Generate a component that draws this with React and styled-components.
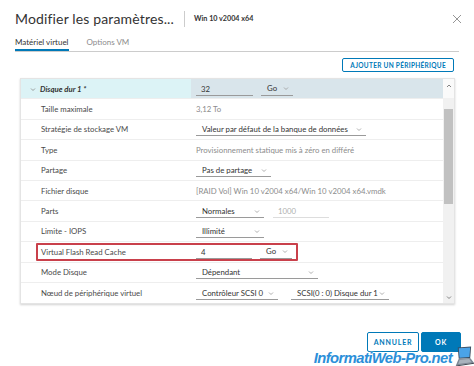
import React from 'react';
import styled, { createGlobalStyle } from 'styled-components';

const GlobalStyle = createGlobalStyle`
    html, body {
        margin: 0;
        padding: 0;
        background: #fff;
    }
    body {
        font-family: Lato, "Open Sans", sans-serif;
        color: #333;
    }
`

const Dialog = styled.div`
    position: relative;
    width: 474px;
    height: 366px;
    padding: 0 15px;
    box-sizing: border-box;
    overflow: hidden;
`

const Header = styled.div`
    display: flex;
    align-items: center;
    height: 34px;
    padding-top: 3px;
    box-sizing: border-box;
`

const Title = styled.div`
    font-size: 14px;
    font-weight: 400;
    color: #333;
    letter-spacing: 0.15px;
`

const Separator = styled.div`
    width: 1px;
    height: 16px;
    background: #ccc;
    margin: 0 9px 0 10px;
`

const VmName = styled.div`
    font-size: 7.2px;
    font-weight: 700;
    color: #333;
    flex: 1;
`

const Close = styled.div`
    width: 10px;
    height: 10px;
    margin-right: -3px;
    display: flex;
`

const TabBar = styled.div`
    display: flex;
    gap: 18px;
    border-bottom: 1px solid #ccc;
`

const Tab = styled.div`
    height: 17px;
    line-height: 16px;
    font-size: 8px;
    color: ${p => (p.active ? '#333' : '#8c8c8c')};
    box-shadow: ${p => (p.active ? 'inset 0 -2px 0 #0079b8' : 'none')};
`

const Toolbar = styled.div`
    display: flex;
    justify-content: flex-end;
    padding: 6px 5px 6px 0;
`

const OutlineButton = styled.button`
    height: 14px;
    padding: 0 7px;
    background: #fff;
    border: 1px solid #0079b8;
    border-radius: 2px;
    color: #0079b8;
    font-family: inherit;
    font-size: 6.5px;
    font-weight: 700;
    letter-spacing: 0.3px;
`

const Card = styled.div`
    display: flex;
    margin: 0 4px 0 5px;
    border: 1px solid #e4e4e4;
    box-shadow: 0 1px 2px rgba(0, 0, 0, 0.18);
`

const Rows = styled.div`
    flex: 1;
`

const Row = styled.div`
    display: flex;
    align-items: center;
    height: 20.4px;
    box-sizing: border-box;
    border-bottom: ${p => (p.last ? 'none' : '1px solid #eee')};
`

const HighlightRow = styled(Row)`
    padding-left: 15px;
`

const Highlight = styled.div`
    display: flex;
    align-items: center;
    width: 262px;
    height: 18px;
    box-sizing: border-box;
    border: 2px solid #c9404b;
    border-radius: 1px;
`

const Label = styled.div`
    width: ${p => p.w || 170}px;
    box-sizing: border-box;
    padding-left: ${p => (p.pad != null ? p.pad : 20)}px;
    font-size: 7.8px;
    color: #4a4a4a;
    align-self: stretch;
    display: flex;
    align-items: center;
    background: ${p => p.bg || 'transparent'};
`

const HeadLabel = styled(Label)`
    gap: 4px;
    font-weight: 700;
    font-style: italic;
    color: #333;
`

const Value = styled.div`
    flex: 1;
    align-self: stretch;
    display: flex;
    align-items: center;
    gap: ${p => p.gap || 8}px;
    padding-left: 5px;
    font-size: 7.8px;
    color: ${p => (p.muted ? '#8c8c8c' : '#333')};
    background: ${p => p.bg || 'transparent'};
    white-space: nowrap;
`

const Input = styled.div`
    width: ${p => p.w}px;
    box-sizing: border-box;
    padding: 0 5px;
    height: 14px;
    line-height: 14px;
    border-bottom: 1px solid ${p => (p.disabled ? '#ddd' : '#9a9a9a')};
    color: ${p => (p.disabled ? '#b0b0b0' : '#333')};
`

const Select = styled.div`
    width: ${p => p.w}px;
    box-sizing: border-box;
    display: flex;
    align-items: center;
    justify-content: space-between;
    padding: 0 4px 0 6px;
    height: 14px;
    border-bottom: 1px solid #9a9a9a;
    color: #333;
`

const Scrollbar = styled.div`
    width: 11px;
    display: flex;
    flex-direction: column;
    background: #f1f1f1;
`

const ScrollArrow = styled.div`
    height: ${p => p.h}px;
    display: flex;
    justify-content: center;
    align-items: ${p => (p.down ? 'flex-end' : 'flex-start')};
    padding: ${p => (p.down ? '0 0 3px' : '4px 0 0')};
    box-sizing: border-box;
    background: ${p => (p.down ? '#f1f1f1' : '#fafafa')};
`

const Track = styled.div`
    flex: 1;
    padding-top: 11px;
`

const Thumb = styled.div`
    height: 95px;
    margin: 0 1px;
    background: #c1c1c1;
`

const Footer = styled.div`
    display: flex;
    justify-content: flex-end;
    gap: 2px;
    margin: 28px -2px 0 0;
`

const FooterButton = styled.button`
    height: 20px;
    padding: 0;
    width: ${p => p.w}px;
    border: 1px solid #0079b8;
    border-radius: 2px;
    background: ${p => (p.primary ? '#0079b8' : '#fff')};
    color: ${p => (p.primary ? '#fff' : '#0079b8')};
    font-family: inherit;
    font-size: 7px;
    font-weight: 700;
    letter-spacing: 0.8px;
`

const Watermark = styled.div`
    position: absolute;
    right: 0;
    bottom: -1px;
    display: flex;
    align-items: flex-end;
    gap: 1px;
`

const WatermarkText = styled.div`
    font-family: "Liberation Sans", Arial, sans-serif;
    font-style: italic;
    font-weight: 700;
    font-size: 14.8px;
    line-height: 18px;
    color: #2b8fd9;
    letter-spacing: -0.6px;
    text-shadow: 0 0 2px #fff, 0 0 2px #fff, 1px 1px 0 #fff;
`

const Chevron = ({ dir = 'down', color = '#999', size = 6 }) => {
    const d = {
        down: 'M1 2.5 L3 4.5 L5 2.5',
        up: 'M1 4 L3 2 L5 4',
    }[dir];
    return (
        <svg width={size} height={size} viewBox="0 0 6 6">
            <path d={d} fill="none" stroke={color} strokeWidth="0.8" />
        </svg>
    );
};

const Laptop = () => (
    <svg width="21" height="22" viewBox="0 0 22 22">
        <polygon points="5,2 19,1 18,13 6,14" fill="#3a4a5c" />
        <polygon points="6,3 18,2.2 17.2,12 6.8,12.8" fill="#4aa3e8" />
        <polygon points="6,14 18,13 22,18 3,21" fill="#7c8794" />
        <polygon points="7,15 17,14.2 19.5,17.5 5.5,19.5" fill="#a9b3bd" />
        <polygon points="3,21 22,18 22,19 3,22" fill="#3d4650" />
    </svg>
);

const CloseIcon = () => (
    <svg width="10" height="10" viewBox="0 0 10 10">
        <path d="M1 1 L9 9 M9 1 L1 9" stroke="#8a8a8a" strokeWidth="0.9" />
    </svg>
);

const SelectBox = ({ w, children }) => (
    <Select w={w}>
        <span>{children}</span>
        <Chevron />
    </Select>
);

export default function App() {
    return (
        <Dialog>
            <GlobalStyle />
            <Header>
                <Title>Modifier les paramètres...</Title>
                <Separator />
                <VmName>Win 10 v2004 x64</VmName>
                <Close><CloseIcon /></Close>
            </Header>
            <TabBar>
                <Tab active>Matériel virtuel</Tab>
                <Tab>Options VM</Tab>
            </TabBar>
            <Toolbar>
                <OutlineButton>AJOUTER UN PÉRIPHÉRIQUE</OutlineButton>
            </Toolbar>
            <Card>
                <Rows>
                    <Row>
                        <HeadLabel bg="#dcf3f6" pad={9}>
                            <Chevron color="#888" size={6} />
                            Disque dur 1 *
                        </HeadLabel>
                        <Value bg="#d9e5eb">
                            <Input w={57}>32</Input>
                            <SelectBox w={32}>Go</SelectBox>
                        </Value>
                    </Row>
                    <Row>
                        <Label>Taille maximale</Label>
                        <Value muted>3,12 To</Value>
                    </Row>
                    <Row>
                        <Label>Stratégie de stockage VM</Label>
                        <Value>
                            <SelectBox w={170}>Valeur par défaut de la banque de données</SelectBox>
                        </Value>
                    </Row>
                    <Row>
                        <Label>Type</Label>
                        <Value muted>Provisionnement statique mis à zéro en différé</Value>
                    </Row>
                    <Row>
                        <Label>Partage</Label>
                        <Value>
                            <SelectBox w={75}>Pas de partage</SelectBox>
                        </Value>
                    </Row>
                    <Row>
                        <Label>Fichier disque</Label>
                        <Value muted>[RAID Vol] Win 10 v2004 x64/Win 10 v2004 x64.vmdk</Value>
                    </Row>
                    <Row>
                        <Label>Parts</Label>
                        <Value gap={9}>
                            <SelectBox w={68}>Normales</SelectBox>
                            <Input w={56} disabled>1000</Input>
                        </Value>
                    </Row>
                    <Row>
                        <Label>Limite - IOPS</Label>
                        <Value>
                            <SelectBox w={68}>Illimité</SelectBox>
                        </Value>
                    </Row>
                    <HighlightRow>
                        <Highlight>
                            <Label w={153} pad={3}>Virtual Flash Read Cache</Label>
                            <Value>
                                <Input w={56}>4</Input>
                                <SelectBox w={32}>Go</SelectBox>
                            </Value>
                        </Highlight>
                    </HighlightRow>
                    <Row>
                        <Label>Mode Disque</Label>
                        <Value>
                            <SelectBox w={122}>Dépendant</SelectBox>
                        </Value>
                    </Row>
                    <Row last>
                        <Label>Nœud de périphérique virtuel</Label>
                        <Value gap={13}>
                            <SelectBox w={82}>Contrôleur SCSI 0</SelectBox>
                            <SelectBox w={98}>SCSI(0 : 0) Disque dur 1</SelectBox>
                        </Value>
                    </Row>
                </Rows>
                <Scrollbar>
                    <ScrollArrow h={19}><Chevron dir="up" color="#666" size={6} /></ScrollArrow>
                    <Track><Thumb /></Track>
                    <ScrollArrow h={12} down><Chevron color="#666" size={6} /></ScrollArrow>
                </Scrollbar>
            </Card>
            <Footer>
                <FooterButton w={52}>ANNULER</FooterButton>
                <FooterButton w={40} primary>OK</FooterButton>
            </Footer>
            <Watermark>
                <WatermarkText>InformatiWeb-Pro.net</WatermarkText>
                <Laptop />
            </Watermark>
        </Dialog>
    );
}
